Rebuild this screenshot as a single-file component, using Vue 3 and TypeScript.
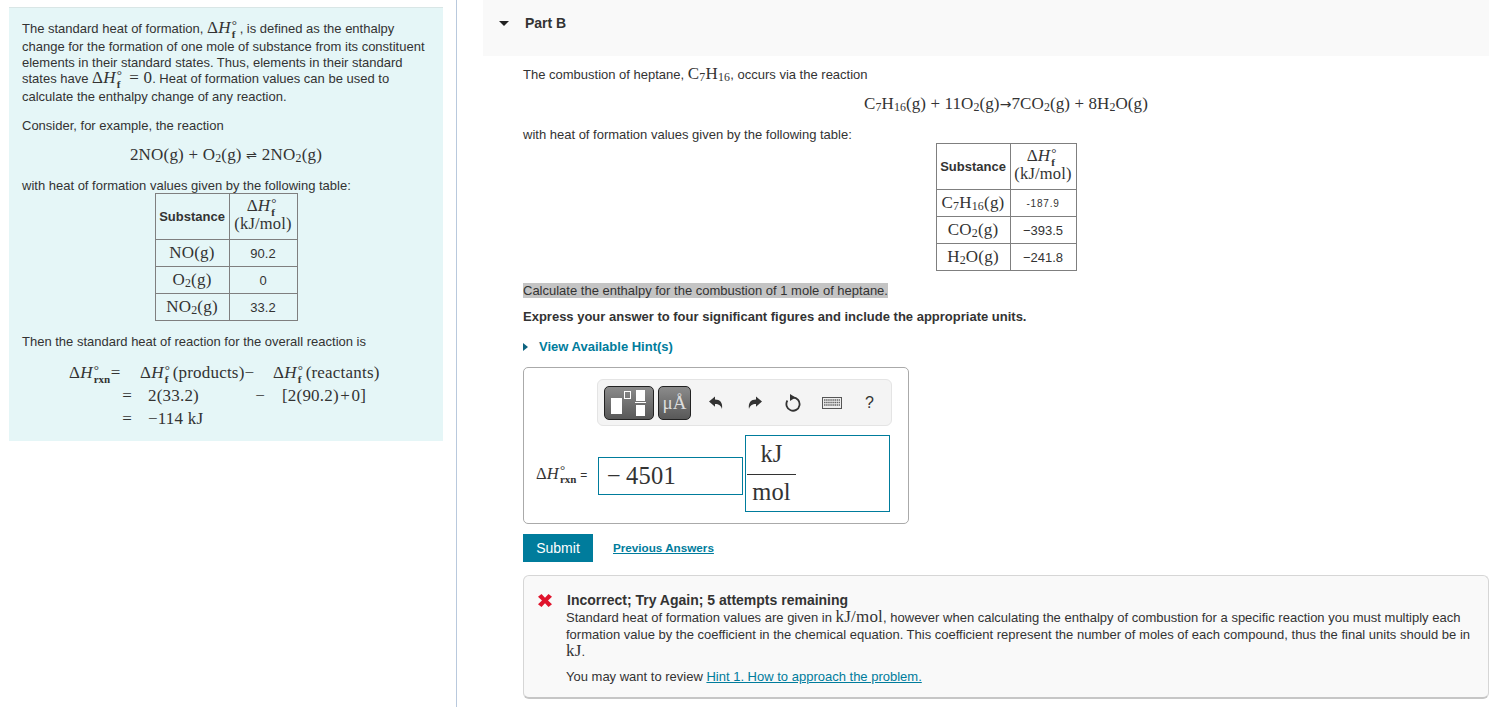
<script setup lang="ts">
interface Row { id: string; value: string }
const keyRows: number[] = [0, 1, 2]
const leftRows: Row[] = [
  { id: 'no', value: '90.2' },
  { id: 'o2', value: '0' },
  { id: 'no2', value: '33.2' },
]
</script>

<template>
  <div class="page">
    <aside class="left">
      <section class="panel">
        <p class="para first">
          <span class="l l18">The standard heat of formation, <span class="m big">Δ<i>H</i><span class="stack"><span>°</span><span class="b">f</span></span></span>, is defined as the enthalpy</span>
          <span class="l l19">change for the formation of one mole of substance from its constituent</span>
          <span class="l l12">elements in their standard states. Thus, elements in their standard</span>
          <span class="l l19">states have <span class="m big">Δ<i>H</i><span class="stack"><span>°</span><span class="b">f</span></span> = 0</span>. Heat of formation values can be used to</span>
          <span class="l l20">calculate the enthalpy change of any reaction.</span>
        </p>
        <p class="para consider">Consider, for example, the reaction</p>
        <div class="eq left-eq m">2NO(g) + O<sub>2</sub>(g) <span class="harp">⇌</span> 2NO<sub>2</sub>(g)</div>
        <p class="para with">with heat of formation values given by the following table:</p>
        <table class="tbl left-tbl">
          <tbody>
            <tr class="head">
              <th class="sub">Substance</th>
              <th class="m"><div>Δ<i>H</i><span class="stack"><span>°</span><span class="b">f</span></span></div><div class="unit">(kJ/mol)</div></th>
            </tr>
            <tr v-for="r in leftRows" :key="r.id">
              <td class="m chem">
                <template v-if="r.id === 'no'">NO(g)</template>
                <template v-else-if="r.id === 'o2'">O<sub>2</sub>(g)</template>
                <template v-else>NO<sub>2</sub>(g)</template>
              </td>
              <td>{{ r.value }}</td>
            </tr>
          </tbody>
        </table>
        <p class="para then">Then the standard heat of reaction for the overall reaction is</p>
        <div class="calc m">
          <div class="c1">Δ<i>H</i><span class="stack small"><span>°</span><span class="b">rxn</span></span>=</div>
          <div class="c2">Δ<i>H</i><span class="stack"><span>°</span><span class="b">f</span></span>(products)−</div>
          <div class="c3">Δ<i>H</i><span class="stack"><span>°</span><span class="b">f</span></span>(reactants)</div>
          <div class="c1 eqs">=</div>
          <div class="c2 split"><span>2(33.2)</span><span>−</span></div>
          <div class="c3 ind">[2(90.2) + 0]</div>
          <div class="c1 eqs">=</div>
          <div class="c2 split"><span>−114 kJ</span></div>
          <div class="c3"></div>
        </div>
      </section>
    </aside>

    <main class="right">
      <header class="part">
        <span class="tri"></span>
        <strong>Part B</strong>
      </header>
      <div class="body">
        <p class="t-comb">The combustion of heptane, <span class="m big">C<sub>7</sub>H<sub>16</sub></span>, occurs via the reaction</p>
        <div class="eq right-eq m">C<sub>7</sub>H<sub>16</sub>(g) + 11O<sub>2</sub>(g)<span class="arrow">→</span>7CO<sub>2</sub>(g) + 8H<sub>2</sub>O(g)</div>
        <p class="t-with">with heat of formation values given by the following table:</p>
        <table class="tbl right-tbl">
          <tbody>
            <tr class="head">
              <th class="sub">Substance</th>
              <th class="m"><div>Δ<i>H</i><span class="stack"><span>°</span><span class="b">f</span></span></div><div class="unit">(kJ/mol)</div></th>
            </tr>
            <tr><td class="m chem">C<sub>7</sub>H<sub>16</sub>(g)</td><td class="tiny">-187.9</td></tr>
            <tr><td class="m chem">CO<sub>2</sub>(g)</td><td><span class="minus">−</span>393.5</td></tr>
            <tr><td class="m chem">H<sub>2</sub>O(g)</td><td><span class="minus">−</span>241.8</td></tr>
          </tbody>
        </table>
        <p class="t-calc"><mark>Calculate the enthalpy for the combustion of 1 mole of heptane.</mark></p>
        <p class="t-exp">Express your answer to four significant figures and include the appropriate units.</p>
        <p class="t-hint"><span class="tri-r"></span>View Available Hint(s)</p>

        <div class="answer">
          <div class="toolbar">
            <button class="tb tpl" type="button" aria-label="Templates">
              <svg width="38" height="28" viewBox="0 0 38 28">
                <rect x="1" y="9" width="11" height="16" fill="#fff" />
                <rect x="14.5" y="2.5" width="6" height="7" fill="none" stroke="#fff" />
                <rect x="26" y="1" width="9" height="11" fill="#fff" />
                <rect x="25" y="13" width="11" height="1" fill="#fff" />
                <rect x="26" y="16" width="9" height="11" fill="#fff" />
              </svg>
            </button>
            <button class="tb mu" type="button">μÅ</button>
            <svg class="ic undo" width="16" height="16" viewBox="0 0 16 16"><path d="M1 6.500 7 1.500V4.500C12 4.500 15 7.500 14 14 13 10.500 11 9 7 9V11.800Z" fill="#333" /></svg>
            <svg class="ic redo" width="16" height="16" viewBox="0 0 16 16"><path d="M15 6.500 9 1.500V4.500C4 4.500 1 7.500 2 14 3 10.500 5 9 9 9V11.800Z" fill="#333" /></svg>
            <svg class="ic reload" width="18" height="18" viewBox="0 0 18 18"><path d="M9 3.500A6.600 6.600 0 1 1 3.400 6.600" fill="none" stroke="#333" stroke-width="1.800" /><path d="M6 0 11.500 3.500 6 7Z" fill="#333" /></svg>
            <svg class="ic kbd" width="20" height="12" viewBox="0 0 20 12">
              <rect x=".5" y=".5" width="19" height="11" fill="#eee" stroke="#555" />
              <g v-for="r in keyRows" :key="r">
                <path :d="`M2 ${3 + r * 2.500}H18`" fill="none" stroke="#666" stroke-width="1.500" stroke-dasharray="1.500 .6" />
              </g>
            </svg>
            <span class="ic q">?</span>
          </div>
          <div class="entry">
            <div class="lbl"><span class="m">Δ<i>H</i><span class="stack small"><span>°</span><span class="b">rxn</span></span></span> =</div>
            <div class="inp m"><span class="neg">−</span>4501</div>
            <div class="units m">
              <div class="frac"><span class="num">kJ</span><span class="den">mol</span></div>
            </div>
          </div>
        </div>

        <div class="actions">
          <button class="submit" type="button">Submit</button>
          <a class="prev">Previous Answers</a>
        </div>

        <section class="fb">
          <svg class="x" width="14" height="13" viewBox="0 0 14 13"><path d="M3.500 0 7 3.700 10.500 0 14 2.800 10 6.500 14 10.200 10.500 13 7 9.300 3.500 13 0 10.200 4 6.500 0 2.800Z" fill="#e0142c" /></svg>
          <div class="fb-title">Incorrect; Try Again; 5 attempts remaining</div>
          <div class="fb-text">
            <span class="fl">Standard heat of formation values are given in <span class="m fm">kJ/mol</span>, however when calculating the enthalpy of combustion for a specific reaction you must multiply each</span>
            <span class="fl">formation value by the coefficient in the chemical equation. This coefficient represent the number of moles of each compound, thus the final units should be in</span>
            <span class="fl"><span class="m fm">kJ</span>.</span>
          </div>
          <div class="fb-hint">You may want to review <a>Hint 1. How to approach the problem.</a></div>
        </section>
      </div>
    </main>
  </div>
</template>

<style>
html, body { margin: 0; background: #fff; }
</style>

<style scoped>
.page {
  display: flex;
  width: 1497px;
  height: 707px;
  overflow: hidden;
  font-family: "Liberation Sans", Arial, sans-serif;
  font-size: 13px;
  color: #333;
  background: #fff;
}
p { margin: 0; }
.m { font-family: "Liberation Serif", "Times New Roman", serif; letter-spacing: .2px; }
sub { font-size: 70%; line-height: 0; vertical-align: -0.2em; }
.left {
  box-sizing: border-box;
  flex: 0 0 457px;
  height: 707px;
  border-right: 1px solid #b9c9dd;
  padding: 7px 13px 0 9px;
}
.panel {
  box-sizing: border-box;
  height: 434px;
  background: #e5f6f7;
  border-top: 1px solid #d9e6e6;
  padding: 11px 13px 0;
}
.l { display: block; white-space: nowrap; }
.l18 { height: 18px; line-height: 18px; }
.l19 { height: 19px; line-height: 19px; }
.l12 { height: 12px; line-height: 14px; }
.l20 { height: 20px; line-height: 20px; }
.big { font-size: 17px; }
.stack {
  display: inline-flex;
  flex-direction: column;
  vertical-align: middle;
  font-size: 11px;
  line-height: 11px;
  width: 8px;
  margin: -4px 0 -4px 1px;
  text-align: left;
}
.stack span:first-child { font-size: 13px; letter-spacing: 0; }
.stack .b { font-weight: 700; letter-spacing: 0; margin-top: -1px; }
.stack.small { width: 17px; }
.consider { margin-top: 11px; line-height: 16px; }
.eq { text-align: center; white-space: nowrap; }
.left-eq { font-size: 17px; margin-top: 11px; line-height: 20px; }
.harp { font-size: 13px; }
.with { margin-top: 12px; line-height: 16px; }
.tbl { border-collapse: collapse; margin: 0 auto; text-align: center; }
.tbl th, .tbl td { border: 1px solid #7f7f7f; padding: 0; font-weight: 400; }
.tbl .sub { font-weight: 700; font-size: 13px; font-family: "Liberation Sans", sans-serif; }
.tbl .m { font-size: 17px; }
.tbl .head .m { line-height: 18px; padding-bottom: 3px; }
.unit { font-size: 16.500px; }
.chem { font-size: 17px; }
.left-tbl { margin-top: -1px; width: 143px; }
.left-tbl .head { height: 46px; }
.left-tbl tr { height: 27px; }
.left-tbl th:first-child, .left-tbl td:first-child { width: 73px; }
.then { margin-top: 13px; line-height: 16px; }
.calc {
  display: grid;
  grid-template-columns: 71px 133px auto;
  grid-auto-rows: 23px;
  margin: 11px 0 0 47px;
  font-size: 17px;
  line-height: 23px;
  white-space: nowrap;
}
.eqs { text-align: right; padding-right: 8px; }
.split { display: flex; justify-content: space-between; padding: 0 8px; }
.ind { padding-left: 9px; word-spacing: -3px; }
.right { flex: 1; min-width: 0; padding-left: 26px; }
.part {
  box-sizing: border-box;
  width: 1006px;
  height: 56px;
  background: #f9f9f9;
  display: flex;
  align-items: flex-start;
  padding: 15px 0 0 16px;
  line-height: 16px;
}
.part strong { margin-left: 16px; font-size: 14px; }
.tri {
  width: 0; height: 0;
  margin-top: 6px;
  border-left: 5px solid transparent;
  border-right: 5px solid transparent;
  border-top: 5px solid #222;
}
.body { width: 966px; padding-left: 40px; }
.t-comb { margin-top: 9px; line-height: 18px; }
.right-eq { font-size: 17px; line-height: 20px; margin-top: 10px; letter-spacing: .1px; }
.arrow { font-family: "DejaVu Sans", sans-serif; font-size: 14px; line-height: 0; }
.t-with { margin-top: 13px; line-height: 16px; }
.right-tbl { margin-top: 0; width: 141px; }
.right-tbl .head { height: 46px; }
.right-tbl tr { height: 27px; }
.right-tbl th:first-child, .right-tbl td:first-child { width: 73px; }
.tiny { font-size: 10px; letter-spacing: .8px; }
.minus { font-size: 13px; }
.t-calc { margin-top: 12px; line-height: 16px; }
mark { background: #c4c4c4; color: #333; }
.t-exp { margin-top: 10px; line-height: 16px; font-weight: 700; }
.t-hint {
  margin-top: 14px;
  line-height: 16px;
  font-weight: 700;
  color: #007c9c;
  display: flex;
  align-items: center;
}
.tri-r {
  width: 0; height: 0;
  margin-right: 11px;
  border-top: 4.500px solid transparent;
  border-bottom: 4.500px solid transparent;
  border-left: 5px solid #0d6380;
}
.answer {
  box-sizing: border-box;
  width: 386px;
  height: 157px;
  margin-top: 12px;
  border: 1px solid #aaa;
  border-radius: 5px;
  padding: 11px 16px 0 12px;
}
.toolbar {
  box-sizing: border-box;
  width: 295px;
  height: 47px;
  margin-left: 61px;
  background: #f4f4f4;
  border: 1px solid #e4e4e4;
  border-radius: 6px;
  display: flex;
  align-items: center;
  padding-left: 6px;
}
.tb {
  box-sizing: border-box;
  height: 34px;
  padding: 0;
  border: 1px solid #222;
  border-radius: 5px;
  background: linear-gradient(#8b8b8b, #585858);
  display: flex;
  align-items: center;
  justify-content: center;
}
.tpl { width: 50px; }
.mu {
  width: 33px;
  margin-left: 4px;
  color: #ddd;
  font-family: "Liberation Serif", serif;
  font-size: 19px;
}
.ic { flex: none; }
.undo { margin-left: 17px; }
.redo { margin-left: 23px; }
.reload { margin-left: 21px; }
.kbd { margin-left: 20px; }
.q { margin-left: 23px; font-size: 16px; color: #333; }
.entry { display: flex; align-items: center; margin-top: 9px; height: 77px; }
.lbl { width: 62px; font-size: 12px; white-space: nowrap; }
.lbl .m { font-size: 16.500px; }
.inp {
  box-sizing: border-box;
  width: 145px;
  height: 38px;
  margin-top: 5px;
  border: 1px solid #007c9c;
  font-size: 24.500px;
  line-height: 35px;
  padding-left: 8px;
}
.neg { margin-right: 5px; }
.units {
  box-sizing: border-box;
  width: 145px;
  height: 77px;
  margin-left: 2px;
  border: 1px solid #007c9c;
  font-size: 24.500px;
  padding: 0 0 0 1px;
}
.frac { display: flex; flex-direction: column; width: 49px; text-align: center; }
.num { height: 38px; line-height: 35px; border-bottom: 1px solid #333; }
.den { line-height: 34px; }
.actions { display: flex; align-items: center; margin-top: 10px; height: 28px; }
.submit {
  box-sizing: border-box;
  width: 70px;
  height: 28px;
  border: 0;
  background: #007c9c;
  color: #fff;
  font-family: inherit;
  font-size: 14px;
  padding: 0;
}
.prev {
  margin: 0 0 1px 20px;
  color: #007c9c;
  font-weight: 700;
  font-size: 11.700px;
  text-decoration: underline;
}
.fb {
  box-sizing: border-box;
  position: relative;
  width: 966px;
  height: 124px;
  margin-top: 13px;
  background: #f9f9f9;
  border: 1px solid #d6d6d6;
  border-bottom-width: 2px;
  border-bottom-color: #c6c6c6;
  border-radius: 6px;
  padding: 16px 0 0 42px;
}
.x { position: absolute; left: 14px; top: 18px; }
.fb-title { margin-left: 1px; font-size: 14px; font-weight: 700; line-height: 16px; white-space: nowrap; }
.fl { display: block; line-height: 17px; height: 17px; white-space: nowrap; }
.fl:nth-child(2) { line-height: 19px; }
.fm { font-size: 17px; }
.fb-hint { margin-top: 9px; line-height: 17px; }
.fb-hint a { color: #007c9c; text-decoration: underline; }
</style>
